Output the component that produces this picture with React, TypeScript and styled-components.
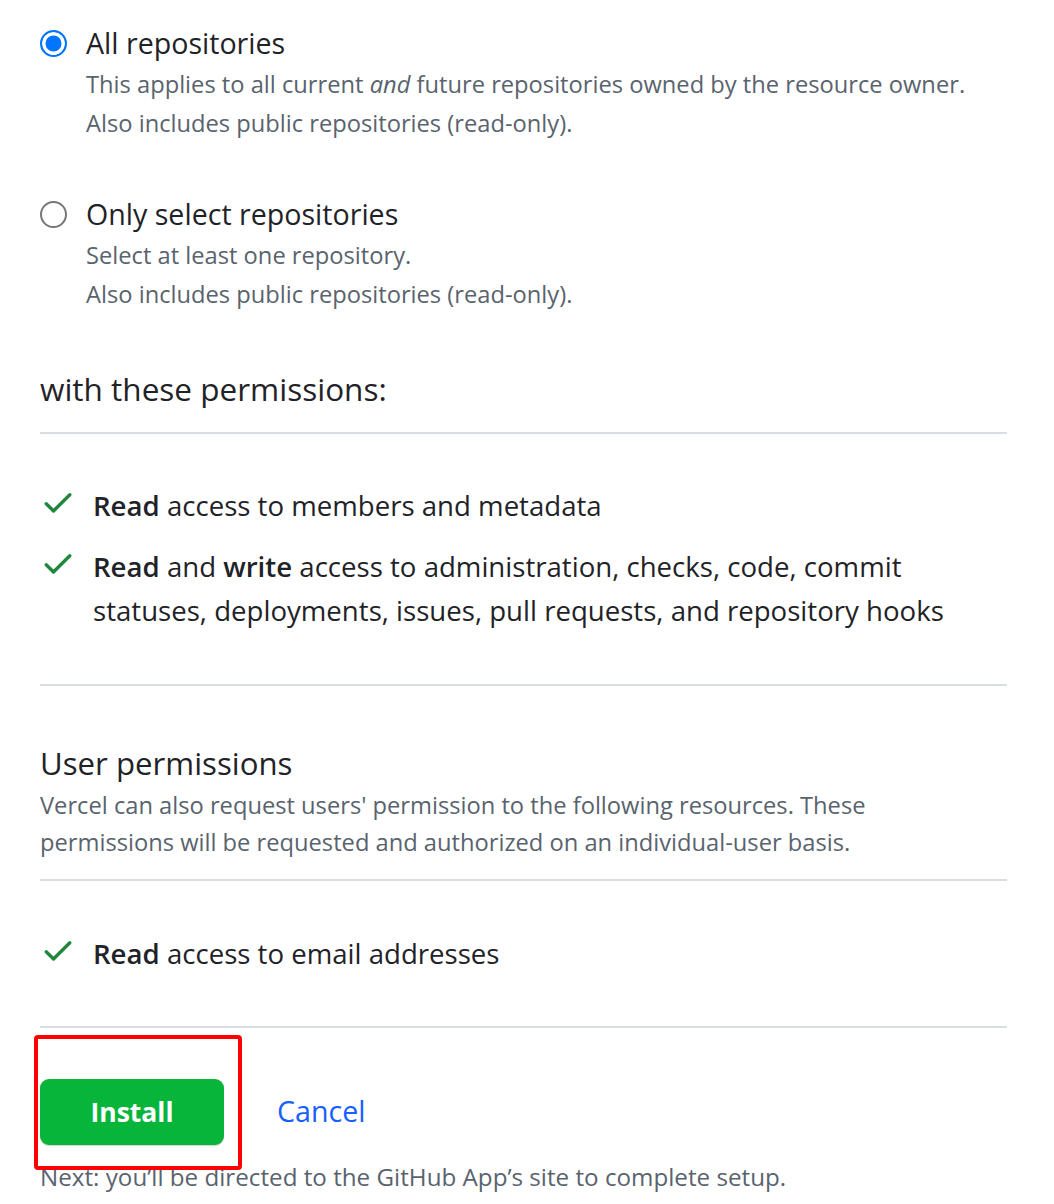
import type { FC } from "react";
import { createGlobalStyle, styled } from "styled-components";

const GlobalStyle = createGlobalStyle`
  body {
    margin: 0;
    background: #ffffff;
    color: #1f2328;
    font-family: "Open Sans", "Noto Sans", sans-serif;
  }
`;

const Page = styled.div`
  width: 967px;
  padding: 22px 0 0 40px;
`;

const Option = styled.div<{ $offset?: number }>`
  display: grid;
  grid-template-columns: 46px 1fr;
  margin-top: ${({ $offset }) => $offset ?? 0}px;
`;

const Radio = styled.span<{ $checked?: boolean }>`
  display: block;
  width: 27px;
  height: 27px;
  margin-top: 8px;
  box-sizing: border-box;
  border-radius: 50%;
  border: ${({ $checked }) =>
    $checked ? "2.5px solid #0075ff" : "2px solid #767676"};
  background: ${({ $checked }) => ($checked ? "#0075ff" : "#ffffff")};
  box-shadow: ${({ $checked }) =>
    $checked ? "inset 0 0 0 3.5px #ffffff" : "none"};
`;

const OptionTitle = styled.div`
  font-size: 28.6px;
  line-height: 42px;
  color: #1f2328;
`;

const Note = styled.div<{ $lh?: number; $offset?: number; $size?: number }>`
  font-size: ${({ $size }) => $size ?? 23.7}px;
  line-height: ${({ $lh }) => $lh ?? 39}px;
  margin-top: ${({ $offset }) => $offset ?? 0}px;
  color: #59636e;
  white-space: nowrap;
`;

const Heading = styled.h2<{ $offset: number; $size: number; $lh: number }>`
  margin: ${({ $offset }) => $offset}px 0 0;
  font-size: ${({ $size }) => $size}px;
  line-height: ${({ $lh }) => $lh}px;
  font-weight: 400;
  color: #1f2328;
`;

const Divider = styled.hr<{ $offset: number }>`
  margin: ${({ $offset }) => $offset}px 0 0;
  height: 2px;
  border: none;
  background: #d8dee4;
`;

const PermList = styled.ul<{ $offset: number }>`
  list-style: none;
  margin: ${({ $offset }) => $offset}px 0 0;
  padding: 0;
  display: flex;
  flex-direction: column;
  gap: 17px;
`;

const PermItem = styled.li`
  display: grid;
  grid-template-columns: 53px 1fr;
  font-size: 27.6px;
  line-height: 44px;
  color: #1f2328;
  white-space: nowrap;

  b {
    font-weight: 600;
  }
`;

const Check = styled.svg`
  width: 36px;
  height: 36px;
  margin: 1px 0 0 0;
  fill: #1f883d;
`;

const Actions = styled.div`
  position: relative;
  display: flex;
  align-items: center;
  gap: 53px;
  margin-top: 51px;
`;

const InstallButton = styled.button`
  height: 66px;
  width: 184px;
  padding: 0;
  border: none;
  border-radius: 9px;
  background: #07b53b;
  box-shadow: 0 1px 1px rgba(0, 0, 0, 0.18);
  color: #ffffff;
  font-family: inherit;
  font-size: 26.5px;
  font-weight: 700;
  cursor: pointer;
`;

const CancelLink = styled.a`
  font-size: 28.6px;
  color: #1560ff;
  text-decoration: none;
  margin-top: -4px;
`;

const Highlight = styled.span`
  position: absolute;
  left: -6px;
  top: -44px;
  width: 208px;
  height: 135px;
  box-sizing: border-box;
  border: 4px solid #ff0000;
  border-radius: 4px;
  pointer-events: none;
`;

const CheckIcon: FC = () => (
  <Check viewBox="0 0 16 16" aria-hidden="true">
    <path d="M13.78 4.22a.75.75 0 0 1 0 1.06l-7.25 7.25a.75.75 0 0 1-1.06 0L2.22 9.28a.751.751 0 0 1 .018-1.042.751.751 0 0 1 1.042-.018L6 10.94l6.72-6.72a.75.75 0 0 1 1.06 0Z" />
  </Check>
);

const App: FC = () => (
  <>
    <GlobalStyle />
    <Page>
      <Option>
        <Radio $checked />
        <div>
          <OptionTitle>All repositories</OptionTitle>
          <Note $offset={1}>
            This applies to all current <i>and</i> future repositories owned
            by the resource owner.
          </Note>
          <Note>Also includes public repositories (read-only).</Note>
        </div>
      </Option>

      <Option $offset={50}>
        <Radio />
        <div>
          <OptionTitle>Only select repositories</OptionTitle>
          <Note $offset={1}>Select at least one repository.</Note>
          <Note>Also includes public repositories (read-only).</Note>
        </div>
      </Option>

      <Heading $offset={53} $size={31.5} $lh={44}>
        with these permissions:
      </Heading>
      <Divider $offset={21} />

      <PermList $offset={49}>
        <PermItem>
          <CheckIcon />
          <span>
            <b>Read</b> access to members and metadata
          </span>
        </PermItem>
        <PermItem>
          <CheckIcon />
          <span>
            <b>Read</b> and <b>write</b> access to administration, checks,
            code, commit
            <br />
            statuses, deployments, issues, pull requests, and repository hooks
          </span>
        </PermItem>
      </PermList>
      <Divider $offset={52} />

      <Heading $offset={56} $size={31.2} $lh={42}>
        User permissions
      </Heading>
      <Note $lh={37} $offset={3}>
        Vercel can also request users' permission to the following resources.
        These
        <br />
        permissions will be requested and authorized on an individual-user
        basis.
      </Note>
      <Divider $offset={18} />

      <PermList $offset={50}>
        <PermItem>
          <CheckIcon />
          <span>
            <b>Read</b> access to email addresses
          </span>
        </PermItem>
      </PermList>
      <Divider $offset={51} />

      <Actions>
        <InstallButton type="button">Install</InstallButton>
        <CancelLink href="#">Cancel</CancelLink>
        <Highlight />
      </Actions>
      <Note $lh={37} $offset={13} $size={24.2}>
        Next: you’ll be directed to the GitHub App’s site to complete setup.
      </Note>
    </Page>
  </>
);

export default App;
